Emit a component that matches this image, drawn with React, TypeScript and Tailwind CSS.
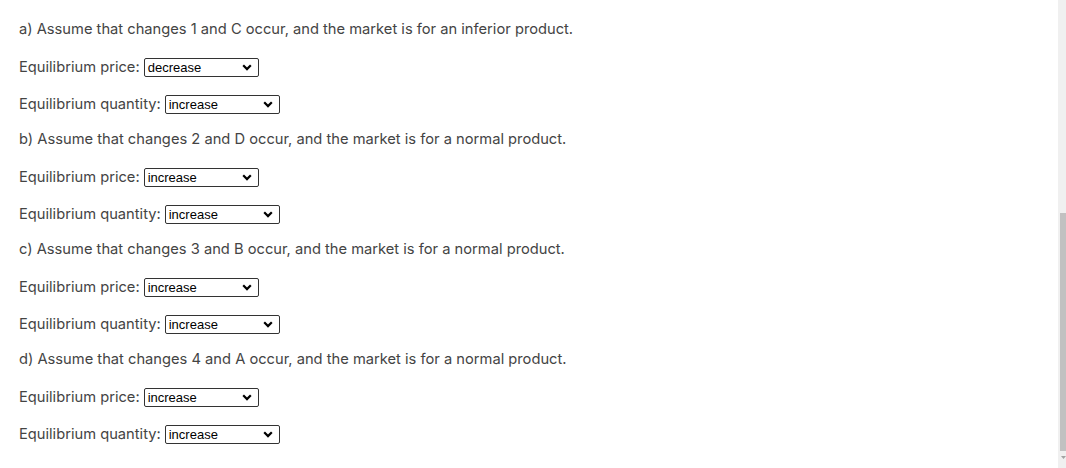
import React from "react";

type Part = { q: string; price: string; qty: string };

const parts: Part[] = [
  { q: "a) Assume that changes 1 and C occur, and the market is for an inferior product.", price: "decrease", qty: "increase" },
  { q: "b) Assume that changes 2 and D occur, and the market is for a normal product.", price: "increase", qty: "increase" },
  { q: "c) Assume that changes 3 and B occur, and the market is for a normal product.", price: "increase", qty: "increase" },
  { q: "d) Assume that changes 4 and A occur, and the market is for a normal product.", price: "increase", qty: "increase" },
];

function FakeSelect({ value }: { value: string }) {
  return (
    <div className="ml-[4px] flex h-[19px] w-[115px] items-center justify-between rounded-[2px] border border-[#333] bg-white pl-[3px] pr-[6px]">
      <span className="text-[13px] leading-none text-black" style={{ fontFamily: "'Liberation Sans', Arial, sans-serif" }}>
        {value}
      </span>
      <svg width="10" height="7" viewBox="0 0 10 7" className="mt-[1px]">
        <path d="M1.2 1.3 L5 5.1 L8.8 1.3" fill="none" stroke="#000" strokeWidth="2.2" />
      </svg>
    </div>
  );
}

function Row({ label, value, mt }: { label: string; value: string; mt: string }) {
  return (
    <div className={`flex h-[20px] items-center ${mt}`}>
      <span>{label}</span>
      <FakeSelect value={value} />
    </div>
  );
}

export default function App() {
  return (
    <div className="flex h-[468px] w-[1066px] overflow-hidden bg-white">
      <div
        className="flex-1 pl-[19px] pt-[19px] text-[14.7px] text-[#444]"
        style={{ fontFamily: "Inter, 'Liberation Sans', sans-serif" }}
      >
        {parts.map((p, i) => (
          <div key={i} className={i === 0 ? "" : "mt-[15px]"}>
            <div className="flex h-[20px] items-center">{p.q}</div>
            <Row label="Equilibrium price:" value={p.price} mt="mt-[18px]" />
            <Row label="Equilibrium quantity:" value={p.qty} mt="mt-[17px]" />
          </div>
        ))}
      </div>
      <div className="flex h-[468px] w-[8px] flex-col bg-[#f0f0f0]">
        <div className="h-[213px]" />
        <div className="ml-[2px] h-[238px] w-[6px] bg-[#c1c1c1]" />
        <div className="flex flex-1 items-start justify-center pl-[2px] pt-[5px]">
          <svg width="5" height="3" viewBox="0 0 5 3">
            <path d="M0 0 L5 0 L2.5 3 Z" fill="#a3a3a3" />
          </svg>
        </div>
      </div>
    </div>
  );
}
